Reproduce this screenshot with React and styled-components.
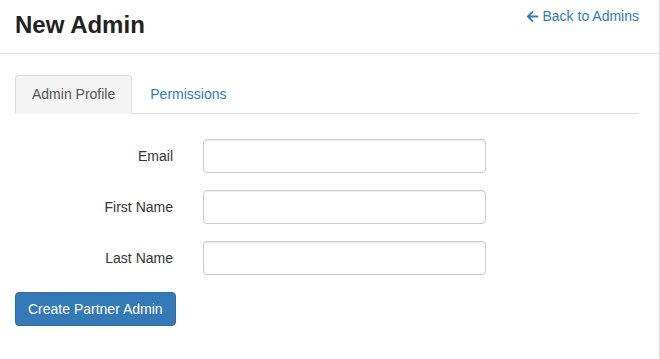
import React from "react";
import styled, { createGlobalStyle } from "styled-components";
import { FaArrowLeft } from "react-icons/fa";

const GlobalStyle = createGlobalStyle`
  html, body {
    margin: 0;
    padding: 0;
    background: #ffffff;
  }
  body {
    font-family: "Liberation Sans", Arial, Helvetica, sans-serif;
    font-size: 14px;
    color: #333333;
  }
`;

const Page = styled.div`
  width: 659px;
  min-height: 359px;
  border-right: 1px solid #dddddd;
  background: #ffffff;
`;

const Header = styled.div`
  height: 53px;
  border-bottom: 1px solid #e3e3e3;
  display: flex;
  justify-content: space-between;
  align-items: flex-start;
  padding: 0 20px 0 15px;
`;

const Title = styled.h1`
  margin: 11px 0 0 0;
  font-size: 24px;
  line-height: 28px;
  font-weight: bold;
  color: #222222;
`;

const BackLink = styled.a`
  margin-top: 6px;
  display: flex;
  align-items: center;
  gap: 4px;
  color: #337ab7;
  font-size: 14px;
  line-height: 20px;
  text-decoration: none;
  cursor: pointer;
`;

const Content = styled.div`
  padding: 21px 20px 0 15px;
`;

const Tabs = styled.ul`
  list-style: none;
  margin: 0;
  padding: 0;
  display: flex;
  gap: 1px;
  border-bottom: 1px solid #dddddd;
`;

const Tab = styled.li`
  margin-bottom: -1px;
  padding: 8px 16px 9px 16px;
  line-height: 20px;
  font-size: 14px;
  border: 1px solid ${(p) => (p.$active ? "#dddddd" : "transparent")};
  border-bottom-color: transparent;
  border-radius: 4px 4px 0 0;
  background: ${(p) => (p.$active ? "#f4f4f4" : "transparent")};
  color: ${(p) => (p.$active ? "#555555" : "#337ab7")};
  cursor: pointer;
`;

const Form = styled.form`
  margin-top: 25px;
  display: grid;
  grid-template-columns: 158px 283px;
  column-gap: 30px;
  row-gap: 17px;
  align-items: center;
`;

const Label = styled.label`
  text-align: right;
  font-size: 14px;
  color: #333333;
`;

const Input = styled.input`
  box-sizing: border-box;
  height: 34px;
  width: 100%;
  padding: 6px 12px;
  border: 1px solid #cccccc;
  border-radius: 4px;
  box-shadow: inset 0 1px 1px rgba(0, 0, 0, 0.075);
  font-family: inherit;
  font-size: 14px;
  outline: none;
`;

const Button = styled.button`
  margin-top: 17px;
  height: 34px;
  padding: 6px 12px;
  border: 1px solid #2e6da4;
  border-radius: 4px;
  background: #337ab7;
  color: #ffffff;
  font-family: inherit;
  font-size: 14px;
  line-height: 20px;
  cursor: pointer;
`;

export default function App() {
  return (
    <>
      <GlobalStyle />
      <Page>
        <Header>
          <Title>New Admin</Title>
          <BackLink>
            <FaArrowLeft size={13} />
            Back to Admins
          </BackLink>
        </Header>
        <Content>
          <Tabs>
            <Tab $active>Admin Profile</Tab>
            <Tab>Permissions</Tab>
          </Tabs>
          <Form onSubmit={(e) => e.preventDefault()}>
            <Label>Email</Label>
            <Input type="text" />
            <Label>First Name</Label>
            <Input type="text" />
            <Label>Last Name</Label>
            <Input type="text" />
          </Form>
          <Button type="button">Create Partner Admin</Button>
        </Content>
      </Page>
    </>
  );
}
